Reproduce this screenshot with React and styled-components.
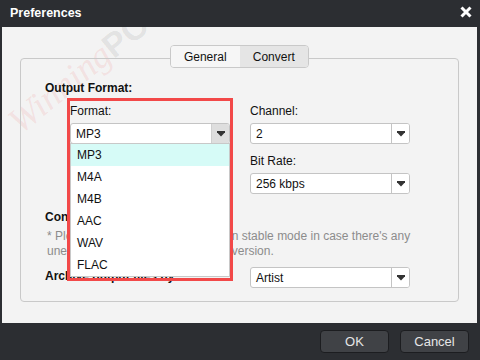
import React from 'react'
import styled, { createGlobalStyle } from 'styled-components'

const GlobalStyle = createGlobalStyle`
  html, body { margin: 0; padding: 0; }
  body {
    width: 480px;
    height: 360px;
    overflow: hidden;
    font-family: "Liberation Sans", Arial, sans-serif;
    font-size: 12px;
    color: #111;
  }
`

const formats = ["MP3", "M4A", "M4B", "AAC", "WAV", "FLAC"]

function Arrow() {
  return (
    <svg width="8" height="6" viewBox="0 0 8 6">
      <path d="M0 0H8V1.3L4 5.5L0 1.3Z" fill="#333" />
    </svg>
  )
}

function Select({ value, open }) {
  return (
    <SelectBox open={open}>
      <SelectValue>{value}</SelectValue>
      <SelectButton open={open}><Arrow /></SelectButton>
    </SelectBox>
  )
}

function App() {
  return (
    <Window>
      <GlobalStyle />
      <TitleBar>
        <Title>Preferences</Title>
        <Close>
          <svg width="12" height="12" viewBox="0 0 12 12">
            <path d="M1.5 1.5L10.5 10.5M10.5 1.5L1.5 10.5" stroke="#fff" strokeWidth="3" />
          </svg>
        </Close>
      </TitleBar>
      <Body>
        <Watermark>
          <WmScript>Winning</WmScript><WmBold>PC</WmBold>
        </Watermark>
        <GroupBox>
          <TabRow>
            <Tabs>
              <Tab>General</Tab>
              <Tab active>Convert</Tab>
            </Tabs>
          </TabRow>
          <Heading>Output Format:</Heading>
          <Columns>
            <Column>
              <Field>
                <RedFrame />
                <Label>Format:</Label>
                <Select value="MP3" open />
                <DropList>
                  {formats.map((f, i) => (
                    <DropItem key={f} selected={i === 0}>{f}</DropItem>
                  ))}
                </DropList>
              </Field>
            </Column>
            <Column>
              <Field>
                <Label>Channel:</Label>
                <Select value="2" />
              </Field>
              <Field>
                <Label>Bit Rate:</Label>
                <Select value="256 kbps" />
              </Field>
            </Column>
          </Columns>
          <Heading2>Conversion Mode:</Heading2>
          <Hint>
            * Please try to use the conversion in stable mode in case there's any<br />
            unexpected error occurs in the conversion.
          </Hint>
          <ArchiveRow>
            <ArchiveLabel>Archive output files by:</ArchiveLabel>
            <ArchiveSelect><Select value="Artist" /></ArchiveSelect>
          </ArchiveRow>
        </GroupBox>
      </Body>
      <Footer>
        <Button>OK</Button>
        <Button>Cancel</Button>
      </Footer>
    </Window>
  )
}

const Window = styled.div`
  width: 480px;
  height: 360px;
  background: #2c2e32;
  display: flex;
  flex-direction: column;
`
const TitleBar = styled.div`
  height: 27px;
  display: flex;
  align-items: center;
  justify-content: space-between;
  padding: 0 8px 0 10px;
`
const Title = styled.div`
  color: #fff;
  font-weight: bold;
  font-size: 12.5px;
  margin-top: -1px;
`
const Close = styled.div`
  display: flex;
  margin-top: -4px;
`
const Body = styled.div`
  position: relative;
  margin: 0 3px 0 2px;
  height: 296px;
  background: #f3f3f3;
  padding: 31px 18px 0 18px;
  box-sizing: border-box;
  overflow: hidden;
`
const Watermark = styled.div`
  position: absolute;
  left: -34px;
  top: 25px;
  width: 220px;
  text-align: center;
  transform: rotate(-39deg);
  pointer-events: none;
  white-space: nowrap;
`
const WmScript = styled.span`
  font-family: "Liberation Serif", serif;
  font-style: italic;
  font-size: 36px;
  color: rgba(235, 110, 110, 0.15);
`
const WmBold = styled.span`
  font-family: "Liberation Sans", sans-serif;
  font-weight: bold;
  font-size: 34px;
  color: rgba(0, 0, 0, 0.08);
`
const GroupBox = styled.div`
  position: relative;
  border: 1px solid #c9c9c9;
  border-radius: 4px;
  height: 244px;
  box-sizing: border-box;
  padding: 0 0 0 24px;
`
const TabRow = styled.div`
  display: flex;
  justify-content: center;
  margin: -14px 0 0 -24px;
`
const Tabs = styled.div`
  display: flex;
  width: 139px;
  height: 23px;
  border: 1px solid #c9c9c9;
  border-radius: 4px;
  overflow: hidden;
  box-sizing: border-box;
`
const Tab = styled.div`
  flex: 1;
  display: flex;
  align-items: center;
  justify-content: center;
  font-size: 12px;
  background: ${p => (p.active ? '#e5e5e5' : '#f6f6f6')};
  color: #111;
`
const Heading = styled.div`
  font-weight: bold;
  line-height: 14px;
  margin-top: 13px;
`
const Columns = styled.div`
  display: flex;
  gap: 20px;
  margin: 9px 0 0 25px;
`
const Column = styled.div`
  width: 160px;
  display: flex;
  flex-direction: column;
  gap: 10px;
`
const Field = styled.div`
  position: relative;
  display: flex;
  flex-direction: column;
  gap: 5px;
`
const RedFrame = styled.div`
  position: absolute;
  left: -3px;
  right: -3px;
  top: -6px;
  height: 183px;
  border: 3px solid #f24848;
  box-sizing: border-box;
  z-index: 3;
  pointer-events: none;
`
const Label = styled.div`
  line-height: 14px;
  font-size: 12px;
`
const SelectBox = styled.div`
  display: flex;
  height: 21px;
  box-sizing: border-box;
  border: 1px solid #c4c4c4;
  border-radius: 3px;
  background: #fff;
  overflow: hidden;
`
const SelectValue = styled.div`
  flex: 1;
  display: flex;
  align-items: center;
  padding-left: 5px;
  font-size: 12px;
`
const SelectButton = styled.div`
  width: 17px;
  display: flex;
  align-items: center;
  justify-content: center;
  border-left: 1px solid ${p => (p.open ? '#d0d0d0' : '#c4c4c4')};
  background: ${p => (p.open ? '#dedede' : '#fff')};
`
const DropList = styled.div`
  position: absolute;
  top: 39px;
  left: 0;
  width: 160px;
  background: #fff;
  border: 1px solid #c8c8c8;
  box-sizing: border-box;
  z-index: 2;
`
const DropItem = styled.div`
  height: 22px;
  display: flex;
  align-items: center;
  padding-left: 6px;
  font-size: 12px;
  background: ${p => (p.selected ? '#d6fbf7' : '#fff')};
`
const Heading2 = styled.div`
  font-weight: bold;
  line-height: 14px;
  margin-top: 16px;
`
const Hint = styled.div`
  color: #8c8c8c;
  line-height: 15px;
  margin-top: 5px;
  padding-left: 2px;
`
const ArchiveRow = styled.div`
  display: flex;
  align-items: center;
  margin-top: 8px;
`
const ArchiveLabel = styled.div`
  width: 205px;
  font-weight: bold;
  line-height: 14px;
  padding-bottom: 3px;
`
const ArchiveSelect = styled.div`
  width: 160px;
`
const Footer = styled.div`
  flex: 1;
  display: flex;
  justify-content: flex-end;
  align-items: center;
  gap: 11px;
  padding-right: 11px;
`
const Button = styled.div`
  width: 69px;
  height: 23px;
  box-sizing: border-box;
  border: 1px solid #1c1d20;
  border-radius: 4px;
  background: #404246;
  color: #e6e6e6;
  font-size: 13px;
  display: flex;
  align-items: center;
  justify-content: center;
`

export default App
